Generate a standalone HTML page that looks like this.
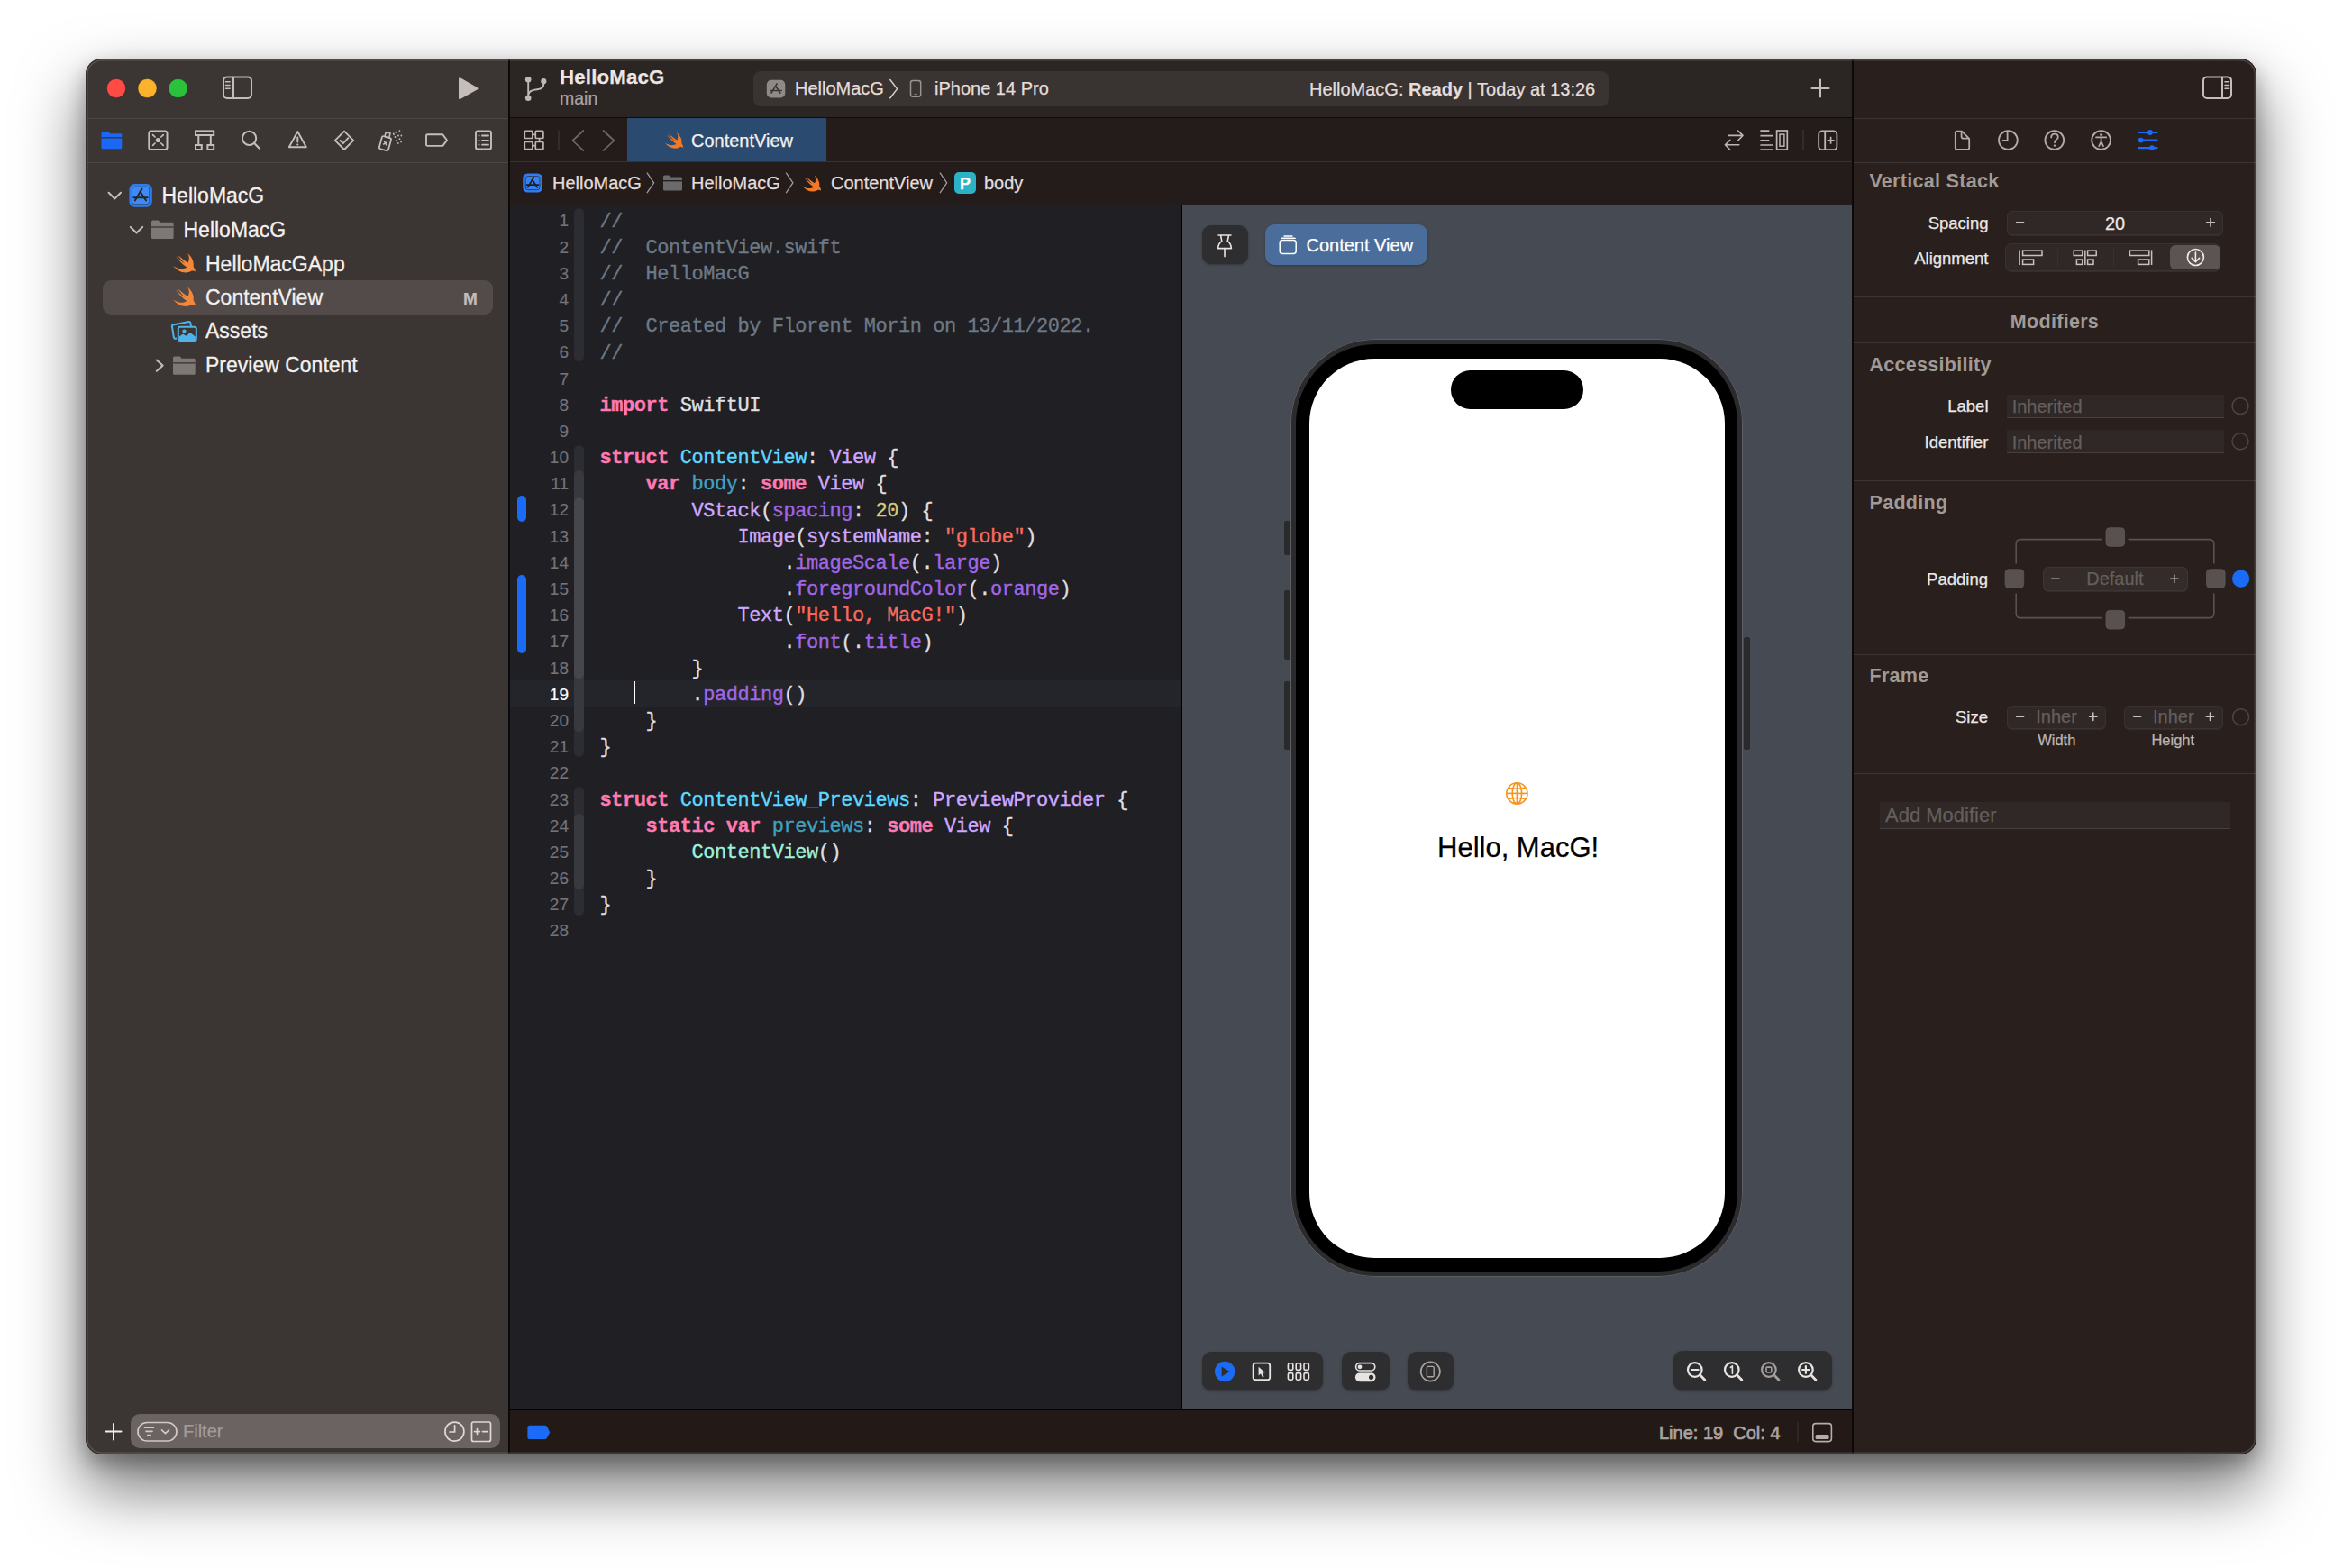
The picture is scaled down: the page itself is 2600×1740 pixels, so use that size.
<!DOCTYPE html>
<html><head><meta charset="utf-8">
<style>
*{box-sizing:border-box;margin:0;padding:0}
html,body{width:2600px;height:1740px;overflow:hidden;background:#fff}
body{position:relative;font-family:"Liberation Sans",sans-serif}
.a{position:absolute}
.t{position:absolute;white-space:pre;line-height:1;-webkit-text-stroke-width:0.25px}
#win{position:absolute;left:95px;top:65px;width:2409px;height:1548.8px;border-radius:18px;overflow:hidden;
 box-shadow:0 36px 70px 4px rgba(0,0,0,.52),0 10px 22px rgba(0,0,0,.28)}
#in{position:absolute;left:-95px;top:-65px;width:2600px;height:1740px;background:#231c1b}
#winborder{position:absolute;left:95px;top:65px;width:2409px;height:1548.8px;border-radius:18px;box-shadow:inset 0 0 0 1.2px rgba(30,27,26,.7),inset 0 0 0 2.4px rgba(255,255,255,.17);pointer-events:none}
.sep{position:absolute;height:1px}
svg{position:absolute;overflow:visible}
.code{position:absolute;left:665.4px;top:0;font-family:"Liberation Mono",monospace;font-size:22px;letter-spacing:-0.45px;-webkit-text-stroke:0.35px currentColor;white-space:pre;color:#dfdfe0}
.ln{position:absolute;left:580px;width:51px;padding-top:2px;text-align:right;font-family:"Liberation Sans",sans-serif;font-size:19px;color:#737378;white-space:pre;-webkit-text-stroke:0.2px #737378}
.k{color:#ff7ab2;font-weight:bold}
.ty{color:#5dd8ff}
.ot{color:#d0a8ff}
.fn{color:#a167e6}
.dc{color:#41a1c0}
.nu{color:#d9c97c}
.st{color:#fc6a5d}
.cm{color:#6c7986}
.pc{color:#9ef1dd}
.lbl{position:absolute;white-space:pre;line-height:1;-webkit-text-stroke-width:0.25px;color:#ece7e5;font-size:18.5px;text-align:right}
.hdr{position:absolute;white-space:pre;line-height:1;color:#a29a97;font-size:21.5px;font-weight:bold;letter-spacing:0.3px}
.fld{position:absolute;background:#2f2826;border-radius:6px;box-shadow:inset 0 0 0 1px rgba(255,255,255,.05),0 1px 0 rgba(255,255,255,.06)}
</style></head><body>
<div id="win"><div id="in">
 <!-- sidebar -->
 <div class="a" style="left:95px;top:64px;width:469px;height:1549px;background:#3b3533"></div>
 <div class="sep" style="left:95px;top:131px;width:469px;background:#4b4543"></div>
 <div class="sep" style="left:95px;top:179.5px;width:469px;background:#4b4543"></div>
 <!-- divider -->
 <div class="a" style="left:564px;top:64px;width:2px;height:1549px;background:#0c0a09"></div>
 <!-- editor titlebar -->
 <div class="a" style="left:566px;top:64px;width:1489px;height:67px;background:#2b2523"></div>
 <div class="a" style="left:566px;top:129.8px;width:1489px;height:1.6px;background:#0e0b0a"></div>
 <!-- tab bar -->
 <div class="a" style="left:566px;top:131px;width:1489px;height:48px;background:#231c1b"></div>
 <div class="a" style="left:696px;top:131px;width:221px;height:48px;background:#2a4a6f"></div>
 <div class="sep" style="left:566px;top:179px;width:1489px;background:#3a3230"></div>
 <!-- breadcrumb -->
 <div class="a" style="left:566px;top:180px;width:1489px;height:47px;background:#231c1b"></div>
 <div class="sep" style="left:566px;top:227px;width:1489px;background:#342d2b"></div>
 <!-- editor -->
 <div class="a" style="left:566px;top:228px;width:745px;height:1336px;background:#1f1f24"></div>
 <!-- preview -->
 <div class="a" style="left:1311px;top:228px;width:1px;height:1336px;background:#000"></div>
 <div class="a" style="left:1312px;top:228px;width:743px;height:1336px;background:#464a52"></div>
 <!-- status bar -->
 <div class="a" style="left:566px;top:1564px;width:1489px;height:1px;background:#000"></div>
 <div class="a" style="left:566px;top:1565px;width:1489px;height:50px;background:#231a18"></div>
 <!-- divider right -->
 <div class="a" style="left:2055px;top:64px;width:2px;height:1549px;background:#0c0a09"></div>
 <!-- inspector -->
 <div class="a" style="left:2057px;top:64px;width:447px;height:1549px;background:#29201e"></div>
 <div class="sep" style="left:2057px;top:131px;width:447px;background:#3d3533"></div>
 <div class="sep" style="left:2057px;top:180px;width:447px;background:#3d3533"></div>
 <div class="sep" style="left:2057px;top:329px;width:447px;background:#3d3533"></div>
 <div class="sep" style="left:2057px;top:380px;width:447px;background:#3d3533"></div>
 <div class="sep" style="left:2057px;top:533px;width:447px;background:#3d3533"></div>
 <div class="sep" style="left:2057px;top:726px;width:447px;background:#3d3533"></div>
 <div class="sep" style="left:2057px;top:858px;width:447px;background:#3d3533"></div>

 <!-- selected row -->
 <div class="a" style="left:113.7px;top:311.3px;width:433px;height:37.3px;border-radius:9px;background:#524b49"></div>
 <!-- tree text -->
 <div class="t" style="left:179.5px;top:205.8px;font-size:23px;color:#f4f0ef;-webkit-text-stroke:0.3px #f4f0ef">HelloMacG</div>
 <div class="t" style="left:203.5px;top:243.5px;font-size:23px;color:#f4f0ef;-webkit-text-stroke:0.3px #f4f0ef">HelloMacG</div>
 <div class="t" style="left:228px;top:281.5px;font-size:23px;color:#f4f0ef;-webkit-text-stroke:0.3px #f4f0ef">HelloMacGApp</div>
 <div class="t" style="left:228px;top:318.7px;font-size:23px;color:#f4f0ef;-webkit-text-stroke:0.3px #f4f0ef">ContentView</div>
 <div class="t" style="left:514px;top:322.1px;font-size:19px;font-weight:bold;color:#c4bcb9">M</div>
 <div class="t" style="left:228px;top:356px;font-size:23px;color:#f4f0ef;-webkit-text-stroke:0.3px #f4f0ef">Assets</div>
 <div class="t" style="left:228px;top:394.3px;font-size:23px;color:#f4f0ef;-webkit-text-stroke:0.3px #f4f0ef">Preview Content</div>
 <!-- filter bar -->
 <div class="a" style="left:144.7px;top:1569.4px;width:410px;height:38px;border-radius:10px;background:#6b6361"></div>
 <div class="t" style="left:203px;top:1577.8px;font-size:20px;color:#a39b99">Filter</div>
<!--SIDEBAR-->

 <div class="t" style="left:621px;top:75px;font-size:22.2px;font-weight:bold;letter-spacing:0.2px;color:#ece7e5">HelloMacG</div>
 <div class="t" style="left:621px;top:100.1px;font-size:19.5px;color:#aaa2a0">main</div>
 <div class="a" style="left:835.5px;top:79px;width:949px;height:38.5px;border-radius:8px;background:#393331"></div>
 <div class="t" style="left:882px;top:87.9px;font-size:20px;color:#e3dddb">HelloMacG</div>
 <div class="t" style="left:1037px;top:87.9px;font-size:20px;color:#e3dddb">iPhone 14 Pro</div>
 <div class="t" style="left:1453px;top:88.5px;font-size:20px;color:#e3dddb">HelloMacG: <b>Ready</b> | Today at 13:26</div>
 <div class="t" style="left:767px;top:145.5px;font-size:20px;color:#f4f1f0">ContentView</div>
 <div class="t" style="left:613px;top:193px;font-size:20px;color:#e3dddb">HelloMacG</div>
 <div class="t" style="left:767px;top:193px;font-size:20px;color:#e3dddb">HelloMacG</div>
 <div class="t" style="left:922px;top:193px;font-size:20px;color:#e3dddb">ContentView</div>
 <div class="t" style="left:1092px;top:193px;font-size:20px;color:#e3dddb">body</div>
 <div class="a" style="left:1059.4px;top:191.2px;width:24px;height:23.5px;border-radius:5px;background:#2ab3c7"></div>
 <div class="t" style="left:1065px;top:194.5px;font-size:18px;font-weight:bold;color:#fff">P</div>
<!--TITLEBAR-->

 <!-- current line -->
 <div class="a" style="left:566px;top:754.5px;width:745px;height:29.22px;background:#23252b"></div>
 <!-- fold ribbon -->
 <div class="a" style="left:636.5px;top:231px;width:11.5px;height:170px;border-radius:6px;background:#2c2d32"></div>
 <div class="a" style="left:636.5px;top:494px;width:11.5px;height:346px;border-radius:6px;background:#2c2d32"></div>
 <div class="a" style="left:636.5px;top:522px;width:11.5px;height:289.6px;border-radius:6px;background:#38393e"></div>
 <div class="a" style="left:636.5px;top:552px;width:11.5px;height:201px;border-radius:6px;background:#46474c"></div>
 <div class="a" style="left:636.5px;top:873px;width:11.5px;height:143px;border-radius:6px;background:#2c2d32"></div>
 <div class="a" style="left:636.5px;top:902.8px;width:11.5px;height:84.2px;border-radius:6px;background:#38393e"></div>
 <!-- change bars -->
 <div class="a" style="left:574px;top:550px;width:9.5px;height:29px;border-radius:5px;background:#1a6cf6"></div>
 <div class="a" style="left:574px;top:637.5px;width:9.5px;height:87.5px;border-radius:5px;background:#1a6cf6"></div>
 <!-- cursor -->
 <div class="a" style="left:703px;top:756px;width:2px;height:25px;background:#fff"></div>
 <div class="ln" style="top:228.4px;line-height:29.18px">1
2
3
4
5
6
7
8
9
10
11
12
13
14
15
16
17
18
<span style="color:#fff;-webkit-text-stroke:0.2px #fff">19</span>
20
21
22
23
24
25
26
27
28</div>
 <div class="code" style="top:231.6px;line-height:29.18px"><span class="cm">//</span>
<span class="cm">//  ContentView.swift</span>
<span class="cm">//  HelloMacG</span>
<span class="cm">//</span>
<span class="cm">//  Created by Florent Morin on 13/11/2022.</span>
<span class="cm">//</span>

<span class="k">import</span> SwiftUI

<span class="k">struct</span> <span class="ty">ContentView</span>: <span class="ot">View</span> {
    <span class="k">var</span> <span class="dc">body</span>: <span class="k">some</span> <span class="ot">View</span> {
        <span class="ot">VStack</span>(<span class="fn">spacing</span>: <span class="nu">20</span>) {
            <span class="ot">Image</span>(<span class="ot">systemName</span>: <span class="st">"globe"</span>)
                .<span class="fn">imageScale</span>(.<span class="fn">large</span>)
                .<span class="fn">foregroundColor</span>(.<span class="fn">orange</span>)
            <span class="ot">Text</span>(<span class="st">"Hello, MacG!"</span>)
                .<span class="fn">font</span>(.<span class="fn">title</span>)
        }
        .<span class="fn">padding</span>()
    }
}

<span class="k">struct</span> <span class="ty">ContentView_Previews</span>: <span class="ot">PreviewProvider</span> {
    <span class="k">static</span> <span class="k">var</span> <span class="dc">previews</span>: <span class="k">some</span> <span class="ot">View</span> {
        <span class="pc">ContentView</span>()
    }
}
</div>
<!--EDITOR-->

 <!-- pin button -->
 <div class="a" style="left:1334.3px;top:250px;width:51.2px;height:43px;border-radius:10px;background:#2e2e30;box-shadow:0 1px 3px rgba(0,0,0,.3)"></div>
 <!-- content view pill -->
 <div class="a" style="left:1404px;top:249.2px;width:180px;height:44.8px;border-radius:10px;background:#4a6d9c;box-shadow:0 1px 3px rgba(0,0,0,.25)"></div>
 <div class="t" style="left:1449.5px;top:262px;font-size:20px;color:#fff">Content View</div>
 <!-- phone -->
 <div class="a" style="left:1425.3px;top:578px;width:7px;height:38px;border-radius:2px;background:#2a2a2c"></div>
 <div class="a" style="left:1425.3px;top:655.4px;width:7px;height:76.3px;border-radius:2px;background:#2a2a2c"></div>
 <div class="a" style="left:1425.3px;top:755.6px;width:7px;height:76px;border-radius:2px;background:#2a2a2c"></div>
 <div class="a" style="left:1934.5px;top:707.3px;width:7px;height:124.3px;border-radius:2px;background:#2a2a2c"></div>
 <div class="a" style="left:1431.9px;top:376.1px;width:502.4px;height:1041px;border-radius:94px;background:#2b2b2d;box-shadow:inset 0 0 0 1px #5d5f63"></div>
 <div class="a" style="left:1437.9px;top:382.2px;width:490.5px;height:1028.5px;border-radius:88px;background:#000"></div>
 <div class="a" style="left:1453px;top:398px;width:461px;height:997.6px;border-radius:72px;background:#fff"></div>
 <div class="a" style="left:1610px;top:411px;width:147px;height:43px;border-radius:21.5px;background:#000"></div>
 <div class="t" style="left:1595px;top:924.5px;font-size:31px;color:#000">Hello, MacG!</div>
 <!-- bottom toolbar -->
 <div class="a" style="left:1334px;top:1499.6px;width:134.3px;height:43.4px;border-radius:10px;background:#2e2e30;box-shadow:0 1px 3px rgba(0,0,0,.3)"></div>
 <div class="a" style="left:1488.6px;top:1499.6px;width:53px;height:43.4px;border-radius:10px;background:#2e2e30;box-shadow:0 1px 3px rgba(0,0,0,.3)"></div>
 <div class="a" style="left:1562.4px;top:1499.6px;width:51.1px;height:43.4px;border-radius:10px;background:#2e2e30;box-shadow:0 1px 3px rgba(0,0,0,.3)"></div>
 <div class="a" style="left:1856.6px;top:1499.4px;width:176px;height:43.8px;border-radius:10px;background:#2e2e30;box-shadow:0 1px 3px rgba(0,0,0,.3)"></div>
 <!-- status bar -->
 <div class="t" style="left:1841px;top:1579.6px;font-size:20px;color:#aaa3a0;-webkit-text-stroke-width:0.7px">Line: 19  Col: 4</div>
<!--PREVIEW-->

 <div class="hdr" style="left:2074.4px;top:191.4px">Vertical Stack</div>
 <div class="lbl" style="left:2006.5px;width:200px;top:238.8px">Spacing</div>
 <div class="lbl" style="left:2006.5px;width:200px;top:277.7px">Alignment</div>
 <div class="fld" style="left:2227.2px;top:234.1px;width:240.3px;height:27.2px"></div>
 <div class="t" style="left:2247px;top:237.7px;width:200px;text-align:center;font-size:20px;color:#ece7e5">20</div>
 <div class="fld" style="left:2225px;top:270.2px;width:239.2px;height:30.5px;border-radius:7px"></div>
 <div class="a" style="left:2407.6px;top:271.8px;width:56px;height:27.2px;border-radius:6px;background:#5b5452"></div>
 <div class="hdr" style="left:2180px;width:200px;text-align:center;top:346.5px">Modifiers</div>
 <div class="hdr" style="left:2074.4px;top:394.7px">Accessibility</div>
 <div class="lbl" style="left:2006.5px;width:200px;top:441.8px">Label</div>
 <div class="lbl" style="left:2006.5px;width:200px;top:481.6px">Identifier</div>
 <div class="a" style="left:2227px;top:437.5px;width:240.7px;height:26.2px;background:#2f2826;border-bottom:1px solid #463f3d"></div>
 <div class="a" style="left:2227px;top:477px;width:240.7px;height:25.6px;background:#2f2826;border-bottom:1px solid #463f3d"></div>
 <div class="t" style="left:2232.7px;top:441px;font-size:20px;color:#655e5c">Inherited</div>
 <div class="t" style="left:2232.7px;top:480.8px;font-size:20px;color:#655e5c">Inherited</div>
 <div class="hdr" style="left:2074.5px;top:548.1px">Padding</div>
 <div class="lbl" style="left:2006px;width:200px;top:634.0px">Padding</div>
 <div class="fld" style="left:2266.5px;top:629.3px;width:161.5px;height:27.1px;background:#332c2a"></div>
 <div class="t" style="left:2315.2px;top:632.4px;font-size:20px;color:#655e5c">Default</div>
 <div class="hdr" style="left:2074.5px;top:740.4px">Frame</div>
 <div class="lbl" style="left:2006px;width:200px;top:786.8px">Size</div>
 <div class="fld" style="left:2226.8px;top:782.7px;width:110.6px;height:26.6px"></div>
 <div class="fld" style="left:2356.5px;top:782.7px;width:110.5px;height:26.6px"></div>
 <div class="t" style="left:2259.3px;top:785.3px;font-size:20px;color:#655e5c">Inher</div>
 <div class="t" style="left:2389px;top:785.3px;font-size:20px;color:#655e5c">Inher</div>
 <div class="t" style="left:2232.3px;width:100px;text-align:center;top:813px;font-size:16.5px;color:#bdb5b2">Width</div>
 <div class="t" style="left:2361.3px;width:100px;text-align:center;top:813px;font-size:16.5px;color:#bdb5b2">Height</div>
 <div class="a" style="left:2086px;top:890px;width:388.5px;height:29.8px;background:#2f2826;border-bottom:1px solid #463f3d"></div>
 <div class="t" style="left:2092px;top:894.2px;font-size:22px;color:#655e5c">Add Modifier</div>
<!--INSPECTOR-->

<svg style="left:0;top:0" width="2600" height="1740" viewBox="0 0 2600 1740">
 <!-- traffic lights -->
 <circle cx="129" cy="98" r="10.5" fill="#fe4c45" stroke="rgba(0,0,0,.25)" stroke-width="1"/>
 <circle cx="163.5" cy="98" r="10.5" fill="#fdb22b" stroke="rgba(0,0,0,.25)" stroke-width="1"/>
 <circle cx="197.6" cy="98" r="10.5" fill="#2ac13b" stroke="rgba(0,0,0,.25)" stroke-width="1"/>
 <!-- sidebar toggle -->
 <rect x="248" y="85.4" width="31" height="23.5" rx="4" fill="none" stroke="#c5bdba" stroke-width="2"/>
 <line x1="259" y1="85.4" x2="259" y2="109" stroke="#c5bdba" stroke-width="2"/>
 <g stroke="#c5bdba" stroke-width="1.6" stroke-linecap="round"><line x1="250.5" y1="90.8" x2="255" y2="90.8"/><line x1="250.5" y1="94.5" x2="255" y2="94.5"/><line x1="250.5" y1="98.2" x2="255" y2="98.2"/></g>
 <!-- play -->
 <path d="M509,88 L509,108.5 Q509,111 511.2,109.8 L529.5,99.6 Q531.5,98.2 529.5,96.9 L511.2,86.6 Q509,85.4 509,88 Z" fill="#c5bdba"/>
 <!-- navigator icons -->
 <path fill="#1b67f6" d="M112.5,147.5 Q112.5,146.1 114,146.1 L119.5,146.1 Q120.8,146.1 121.5,147.4 L122,148.3 L134,148.3 Q135.3,148.3 135.3,149.6 L135.3,152 L112.5,152 Z M112.5,153.4 L135.3,153.4 L135.3,164 Q135.3,165.3 134,165.3 L113.8,165.3 Q112.5,165.3 112.5,164 Z"/>
 <rect x="165.3" y="145.4" width="20.2" height="20.6" rx="2.5" fill="none" stroke="#c5bdba" stroke-width="2"/>
 <circle cx="175.4" cy="155.5" r="2.6" fill="#c5bdba"/>
 <g stroke="#c5bdba" stroke-width="1.7" stroke-linecap="round"><line x1="169.6" y1="149.6" x2="172" y2="152"/><line x1="181.2" y1="149.6" x2="178.8" y2="152"/><line x1="169.6" y1="161.4" x2="172" y2="159"/><line x1="181.2" y1="161.4" x2="178.8" y2="159"/></g>
 <rect x="217" y="145.4" width="20.2" height="4.6" fill="none" stroke="#c5bdba" stroke-width="2"/>
 <line x1="220.3" y1="150" x2="220.3" y2="161" stroke="#c5bdba" stroke-width="2"/><line x1="233.8" y1="150" x2="233.8" y2="161" stroke="#c5bdba" stroke-width="2"/>
 <rect x="217" y="161" width="6.8" height="5" fill="none" stroke="#c5bdba" stroke-width="2"/><rect x="230.4" y="161" width="6.8" height="5" fill="none" stroke="#c5bdba" stroke-width="2"/>
 <circle cx="276.6" cy="153.4" r="7.6" fill="none" stroke="#c5bdba" stroke-width="2"/>
 <line x1="282.2" y1="159" x2="287.6" y2="164.6" stroke="#c5bdba" stroke-width="2.2" stroke-linecap="round"/>
 <path d="M330.3,146 L339.8,163.3 L320.8,163.3 Z" fill="none" stroke="#c5bdba" stroke-width="1.9" stroke-linejoin="round"/>
 <line x1="330.3" y1="152.5" x2="330.3" y2="157.5" stroke="#c5bdba" stroke-width="2" stroke-linecap="round"/><circle cx="330.3" cy="160.5" r="1.1" fill="#c5bdba"/>
 <path d="M382,145.6 L392.2,155.8 L382,166 L371.8,155.8 Z" fill="none" stroke="#c5bdba" stroke-width="1.9" stroke-linejoin="round"/>
 <path d="M377.6,156 L380.8,159.2 L386.4,153.2" fill="none" stroke="#c5bdba" stroke-width="1.9" stroke-linecap="round" stroke-linejoin="round"/>
 <g transform="rotate(15 428 158)"><rect x="422.5" y="152" width="10.5" height="14.5" rx="1.8" fill="none" stroke="#c5bdba" stroke-width="1.8"/><rect x="425.3" y="147" width="5" height="5" fill="none" stroke="#c5bdba" stroke-width="1.6"/>
 <path d="M425.8,157 L429.8,161 M429.8,157 L425.8,161" stroke="#c5bdba" stroke-width="1.5"/></g>
 <g fill="#c5bdba"><circle cx="436.8" cy="148.5" r=".9"/><circle cx="439.3" cy="146.8" r=".9"/><circle cx="443.4" cy="145.1" r=".9"/><circle cx="438.5" cy="152" r=".9"/><circle cx="442" cy="150.5" r=".9"/><circle cx="445.4" cy="150.5" r=".9"/><circle cx="440" cy="155.8" r=".9"/><circle cx="443.5" cy="154.2" r=".9"/><circle cx="441.8" cy="158.9" r=".9"/><circle cx="445" cy="157.4" r=".9"/><circle cx="437" cy="149.5" r=".7"/></g>
 <path d="M474.5,149.3 L491.3,149.3 L496,155.6 L491.3,161.9 L474.5,161.9 Q473,161.9 473,160.4 L473,150.8 Q473,149.3 474.5,149.3 Z" fill="none" stroke="#c5bdba" stroke-width="1.9" stroke-linejoin="round"/>
 <rect x="528" y="145.5" width="17" height="20" rx="2" fill="none" stroke="#c5bdba" stroke-width="1.9"/>
 <g stroke="#c5bdba" stroke-width="1.8" stroke-linecap="round"><line x1="535" y1="150.5" x2="542" y2="150.5"/><line x1="535" y1="155.8" x2="542" y2="155.8"/><line x1="535" y1="160.6" x2="542" y2="160.6"/></g>
 <g fill="#c5bdba"><circle cx="531.5" cy="150.5" r="1"/><circle cx="531.5" cy="155.8" r="1"/><circle cx="531.5" cy="160.6" r="1"/></g>
 <!-- tree -->
 <path d="M120.6,213.8 L127.3,220.4 L134,213.8" fill="none" stroke="#c2bab7" stroke-width="2.1" stroke-linecap="round" stroke-linejoin="round"/>
 <rect x="144.4" y="205.1" width="23.400000000000006" height="23.599999999999994" rx="5" fill="#3d8bf8" stroke="#2d7cf6" stroke-width="2"/><rect x="146.4" y="207.1" width="19.400000000000006" height="19.599999999999994" rx="3" fill="none" stroke="#2b2523" stroke-width="0.9" opacity=".7"/><g stroke="#2b2523" stroke-width="2.00" stroke-linecap="round" fill="none"><path d="M157.50,209.70 L149.80,222.50"/><path d="M155.50,212.70 L162.10,222.50"/><path d="M148.30,219.20 L163.70,219.20"/></g>
 <path d="M144.9,251.9 L151.5,258.6 L158.1,251.9" fill="none" stroke="#c2bab7" stroke-width="2.1" stroke-linecap="round" stroke-linejoin="round"/>
 <path fill="#7d7876" d="M169.5,244.6 L175.38,244.6 Q176.364,244.6 177.34799999999998,246.79999999999998 L191.1,246.79999999999998 Q192.6,246.79999999999998 192.6,248.29999999999998 L192.6,263.5 Q192.6,265 191.1,265 L169.5,265 Q168,265 168,263.5 L168,246.1 Q168,244.6 169.5,244.6 Z"/><rect x="168" y="251.332" width="24.599999999999994" height="1.3" fill="#3b3533"/>
 <path transform="translate(192,281.1) scale(1.0)" fill="#f5873a" d="M16.2,0 C20.5,3.6 23.6,9.2 22.6,14.6 C23.8,16.4 25,18.6 24.8,20.4 C23.4,19.2 21.6,19 19.8,19.8 C13.5,23.2 5.6,20.6 0.3,13.8 C5.6,17.6 11.6,18.2 15.4,15.4 C11,12.6 6.4,8.2 2.7,2.8 C6.6,6.6 10.6,9.8 13.2,11.4 C10.4,8.4 7.6,5 5.4,1.8 C9.4,5.2 13.6,8.6 16.6,10.4 C18.2,7.2 18.4,3.6 16.2,0 Z"/>
 <path transform="translate(192,318.6) scale(1.0)" fill="#f5873a" d="M16.2,0 C20.5,3.6 23.6,9.2 22.6,14.6 C23.8,16.4 25,18.6 24.8,20.4 C23.4,19.2 21.6,19 19.8,19.8 C13.5,23.2 5.6,20.6 0.3,13.8 C5.6,17.6 11.6,18.2 15.4,15.4 C11,12.6 6.4,8.2 2.7,2.8 C6.6,6.6 10.6,9.8 13.2,11.4 C10.4,8.4 7.6,5 5.4,1.8 C9.4,5.2 13.6,8.6 16.6,10.4 C18.2,7.2 18.4,3.6 16.2,0 Z"/>
 <g fill="none" stroke="#4fb3ea" stroke-width="2" stroke-linejoin="round">
  <path d="M192,360.5 L209.5,357 Q211,356.8 211.3,358.3 L212,362"/>
  <path d="M196,375.5 L194.6,375.8 Q193.2,376 192.9,374.6 L190.9,362.1 Q190.7,360.7 192,360.5"/>
  <rect x="197.8" y="362.8" width="20" height="15.3" rx="2"/>
 </g>
 <circle cx="204.5" cy="367.6" r="2.1" fill="#4fb3ea"/>
 <path d="M198.8,377 L198.8,373.5 L203,370.5 L206.5,372.8 L211,369 L216.8,373.5 L216.8,377 Z" fill="#4fb3ea"/>
 <path d="M173.8,399.5 L180.6,405.6 L173.8,411.7" fill="none" stroke="#c2bab7" stroke-width="2.1" stroke-linecap="round" stroke-linejoin="round"/>
 <path fill="#7d7876" d="M193.5,395.5 L199.41,395.5 Q200.398,395.5 201.386,397.7 L215.2,397.7 Q216.7,397.7 216.7,399.2 L216.7,414.3 Q216.7,415.8 215.2,415.8 L193.5,415.8 Q192,415.8 192,414.3 L192,397.0 Q192,395.5 193.5,395.5 Z"/><rect x="192" y="402.199" width="24.69999999999999" height="1.3" fill="#3b3533"/>
 <!-- filter bar icons -->
 <g stroke="#f2eeed" stroke-width="2" stroke-linecap="round"><line x1="117.5" y1="1588.6" x2="134.5" y2="1588.6"/><line x1="126" y1="1580" x2="126" y2="1597.5"/></g>
 <rect x="153" y="1578.5" width="43" height="20.5" rx="10.2" fill="none" stroke="#d0c8c5" stroke-width="1.7"/>
 <g stroke="#d0c8c5" stroke-width="1.6" stroke-linecap="round"><line x1="160.5" y1="1584.3" x2="170.5" y2="1584.3"/><line x1="162" y1="1588.4" x2="169" y2="1588.4"/><line x1="163.8" y1="1592.5" x2="167.3" y2="1592.5"/></g>
 <path d="M179.5,1586.8 L183.5,1590.6 L187.5,1586.8" fill="none" stroke="#d0c8c5" stroke-width="1.7" stroke-linecap="round" stroke-linejoin="round"/>
 <circle cx="504.4" cy="1588.6" r="10.5" fill="none" stroke="#ded8d6" stroke-width="1.7"/>
 <path d="M504.6,1581.8 L504.6,1589 L499,1589" fill="none" stroke="#ded8d6" stroke-width="1.7" stroke-linecap="round"/>
 <rect x="523.5" y="1578" width="21" height="21.5" rx="2" fill="none" stroke="#ded8d6" stroke-width="1.7"/>
 <g stroke="#ded8d6" stroke-width="1.6" stroke-linecap="round"><line x1="526.5" y1="1588.6" x2="532.5" y2="1588.6"/><line x1="529.5" y1="1585.6" x2="529.5" y2="1591.6"/><line x1="535.5" y1="1588.6" x2="541" y2="1588.6"/></g>

 <!-- branch -->
 <g fill="#c0b8b6"><circle cx="586.2" cy="88.2" r="3.3"/><circle cx="586.2" cy="108.7" r="3.3"/><circle cx="603.3" cy="90.2" r="3.1"/></g>
 <path d="M586.2,88.2 L586.2,108.7 M603.3,90.2 L603.3,93 Q603.3,98.6 596,99.3 Q587,100 586.5,105" fill="none" stroke="#c0b8b6" stroke-width="1.9"/>
 <!-- scheme -->
 <rect x="851.8" y="89.7" width="18.5" height="17.89999999999999" rx="4.1000000000000005" fill="#8f8a88" stroke="#8f8a88" stroke-width="2"/><g stroke="#3a3432" stroke-width="1.61" stroke-linecap="round" fill="none"><path d="M862.18,92.84 L855.97,103.17"/><path d="M860.57,95.26 L865.89,103.17"/><path d="M854.75,100.51 L867.18,100.51"/></g>
 <path d="M987.4,88 L995.6,98.6 L987.4,109.2" fill="none" stroke="#d6d0ce" stroke-width="1.5" stroke-linejoin="round"/>
 <rect x="1010.5" y="89.6" width="11.2" height="17.6" rx="2.4" fill="none" stroke="#9b9391" stroke-width="1.5"/>
 <line x1="1014.5" y1="104.6" x2="1017.7" y2="104.6" stroke="#9b9391" stroke-width="1"/>
 <!-- titlebar plus -->
 <g stroke="#c5bdba" stroke-width="2" stroke-linecap="round"><line x1="2010.5" y1="98" x2="2029.5" y2="98"/><line x1="2020" y1="88.5" x2="2020" y2="107.5"/></g>
 <!-- inspector toggle -->
 <rect x="2445" y="85.4" width="31" height="23.5" rx="4" fill="none" stroke="#c5bdba" stroke-width="2"/>
 <line x1="2466" y1="85.4" x2="2466" y2="109" stroke="#c5bdba" stroke-width="2"/>
 <g stroke="#c5bdba" stroke-width="1.6" stroke-linecap="round"><line x1="2469" y1="90.8" x2="2473.5" y2="90.8"/><line x1="2469" y1="94.5" x2="2473.5" y2="94.5"/><line x1="2469" y1="98.2" x2="2473.5" y2="98.2"/></g>
 <!-- tab bar left -->
 <g fill="none" stroke="#bdb5b2" stroke-width="1.7">
  <rect x="582.3" y="145.3" width="8.6" height="8.2" rx=".8"/><rect x="594.3" y="145.3" width="8.6" height="8.2" rx=".8"/>
  <rect x="582.3" y="157.5" width="8.6" height="8.2" rx=".8"/><rect x="594.3" y="157.5" width="8.6" height="8.2" rx=".8"/>
  <line x1="590.9" y1="149.4" x2="594.3" y2="149.4"/><line x1="598.6" y1="153.5" x2="598.6" y2="157.5"/><line x1="590.9" y1="161.6" x2="594.3" y2="161.6"/>
 </g>
 <line x1="620" y1="144.5" x2="620" y2="166.5" stroke="#3f3735" stroke-width="1.2"/>
 <path d="M647.4,145 L635.4,156 L647.4,167.2" fill="none" stroke="#6f6664" stroke-width="1.7" stroke-linecap="round" stroke-linejoin="round"/>
 <path d="M669.5,145 L681.5,156 L669.5,167.2" fill="none" stroke="#6f6664" stroke-width="1.7" stroke-linecap="round" stroke-linejoin="round"/>
 <path transform="translate(737.6,147) scale(0.83)" fill="#f27a26" d="M16.2,0 C20.5,3.6 23.6,9.2 22.6,14.6 C23.8,16.4 25,18.6 24.8,20.4 C23.4,19.2 21.6,19 19.8,19.8 C13.5,23.2 5.6,20.6 0.3,13.8 C5.6,17.6 11.6,18.2 15.4,15.4 C11,12.6 6.4,8.2 2.7,2.8 C6.6,6.6 10.6,9.8 13.2,11.4 C10.4,8.4 7.6,5 5.4,1.8 C9.4,5.2 13.6,8.6 16.6,10.4 C18.2,7.2 18.4,3.6 16.2,0 Z"/>
 <!-- tab bar right -->
 <g fill="none" stroke="#bdb5b2" stroke-width="1.6" stroke-linecap="round" stroke-linejoin="round">
  <path d="M1918.2,150.4 L1934,150.4 M1928.6,145 L1934,150.4 L1928.6,156"/>
  <path d="M1929.8,160.8 L1914.4,160.8 M1919.8,155.4 L1914.4,160.8 L1919.8,166.2"/>
 </g>
 <g stroke="#bdb5b2" stroke-width="1.7"><line x1="1953.4" y1="145.2" x2="1963.3" y2="145.2"/><line x1="1953.4" y1="150.6" x2="1967" y2="150.6"/><line x1="1953.4" y1="155.8" x2="1963.3" y2="155.8"/><line x1="1953.4" y1="161" x2="1967" y2="161"/><line x1="1953.4" y1="166.1" x2="1967" y2="166.1"/></g>
 <rect x="1971.6" y="145" width="11.7" height="21" fill="none" stroke="#bdb5b2" stroke-width="1.7"/>
 <rect x="1975" y="149.1" width="4.9" height="13.1" fill="none" stroke="#bdb5b2" stroke-width="1.5"/>
 <line x1="2001" y1="144" x2="2001" y2="167" stroke="#3f3735" stroke-width="1.2"/>
 <rect x="2018.2" y="145.4" width="20.2" height="20.8" rx="4" fill="none" stroke="#bdb5b2" stroke-width="1.8"/>
 <line x1="2025.2" y1="145.4" x2="2025.2" y2="166.2" stroke="#bdb5b2" stroke-width="1.8"/>
 <g stroke="#bdb5b2" stroke-width="1.6"><line x1="2027.6" y1="155.8" x2="2035.6" y2="155.8"/><line x1="2031.6" y1="151.8" x2="2031.6" y2="159.8"/></g>
 <!-- breadcrumb -->
 <rect x="581.2" y="193.5" width="19.799999999999955" height="19.099999999999994" rx="4.359999999999991" fill="#3483f6" stroke="#2f7bf4" stroke-width="2"/><rect x="583.2" y="195.5" width="15.799999999999955" height="15.099999999999994" rx="2.6159999999999943" fill="none" stroke="#231c1b" stroke-width="0.9" opacity=".7"/><g stroke="#231c1b" stroke-width="1.72" stroke-linecap="round" fill="none"><path d="M592.30,196.87 L585.69,207.86"/><path d="M590.59,199.45 L596.25,207.86"/><path d="M584.41,205.02 L597.62,205.02"/></g>
 <path d="M717.9,191.6 L725.6,202.9 L717.9,214.2" fill="none" stroke="#a29a98" stroke-width="1.3" stroke-linejoin="round"/>
 <path fill="#6b6a6b" d="M737.5,194.4 L742.3,194.4 Q743.14,194.4 743.98,196.6 L755.5,196.6 Q757,196.6 757,198.1 L757,210.0 Q757,211.5 755.5,211.5 L737.5,211.5 Q736,211.5 736,210.0 L736,195.9 Q736,194.4 737.5,194.4 Z"/><rect x="736" y="200.043" width="21" height="1.3" fill="#231c1b"/>
 <path d="M872.2,191.6 L879.9,202.9 L872.2,214.2" fill="none" stroke="#a29a98" stroke-width="1.3" stroke-linejoin="round"/>
 <path transform="translate(890,194.4) scale(0.85)" fill="#f27a26" d="M16.2,0 C20.5,3.6 23.6,9.2 22.6,14.6 C23.8,16.4 25,18.6 24.8,20.4 C23.4,19.2 21.6,19 19.8,19.8 C13.5,23.2 5.6,20.6 0.3,13.8 C5.6,17.6 11.6,18.2 15.4,15.4 C11,12.6 6.4,8.2 2.7,2.8 C6.6,6.6 10.6,9.8 13.2,11.4 C10.4,8.4 7.6,5 5.4,1.8 C9.4,5.2 13.6,8.6 16.6,10.4 C18.2,7.2 18.4,3.6 16.2,0 Z"/>
 <path d="M1043,191.6 L1050.7,202.9 L1043,214.2" fill="none" stroke="#a29a98" stroke-width="1.3" stroke-linejoin="round"/>
 <!-- inspector tabs -->
 <g fill="none" stroke="#b3aba8" stroke-width="1.8" stroke-linejoin="round">
  <path d="M2171.5,145.6 L2177,145.6 L2185.2,153.8 L2185.2,164 Q2185.2,165.8 2183.4,165.8 L2171.5,165.8 Q2169.8,165.8 2169.8,164 L2169.8,147.4 Q2169.8,145.6 2171.5,145.6 Z"/>
  <path d="M2176.6,145.8 L2176.6,151.4 Q2176.6,153.6 2178.8,153.6 L2185,153.6"/>
  <circle cx="2228.4" cy="155.6" r="10.4"/>
  <path d="M2227.6,147.6 L2227.6,155.9 L2222.6,155.9" stroke-linecap="round"/>
  <circle cx="2279.8" cy="155.6" r="10.4"/>
  <circle cx="2331.6" cy="155.6" r="10.4"/>
 </g>
 <path d="M2276.2,152.4 Q2276.2,148.6 2280,148.6 Q2283.8,148.6 2283.8,152 Q2283.8,154.2 2281.6,155.2 Q2280,156 2280,158.2" fill="none" stroke="#b3aba8" stroke-width="1.8" stroke-linecap="round"/>
 <circle cx="2280" cy="161.6" r="1.2" fill="#b3aba8"/>
 <circle cx="2331.6" cy="149.4" r="1.5" fill="#b3aba8"/>
 <path d="M2326,152.4 L2337.2,152.4 M2331.6,152.4 L2331.6,157.4 M2331.6,157 L2329.2,162.2 M2331.6,157 L2334,162.2" fill="none" stroke="#b3aba8" stroke-width="1.7" stroke-linecap="round" stroke-linejoin="round"/>
 <g stroke="#1a6cf6" stroke-width="2.2" stroke-linecap="round"><line x1="2373" y1="147" x2="2393.5" y2="147"/><line x1="2373" y1="155.6" x2="2393.5" y2="155.6"/><line x1="2373" y1="164.1" x2="2393.5" y2="164.1"/></g>
 <g fill="#1a6cf6"><circle cx="2385.9" cy="147" r="2.9"/><circle cx="2375.7" cy="155.6" r="2.9"/><circle cx="2388" cy="164.1" r="2.9"/></g>

 <!-- pin -->
 <g fill="none" stroke="#e8e4e2" stroke-width="1.6" stroke-linejoin="round" stroke-linecap="round">
  <path d="M1352,261 L1366,261 M1354.5,261 L1355.8,267.6 Q1352,270 1351.6,275.6 L1366.4,275.6 Q1366,270 1362.2,267.6 L1363.5,261"/>
  <line x1="1359" y1="275.6" x2="1359" y2="284.6"/>
 </g>
 <!-- pill icon -->
 <g fill="none" stroke="#fff" stroke-width="1.5">
  <line x1="1424.5" y1="262" x2="1434.5" y2="262"/>
  <path d="M1421.6,265 Q1421.6,264.2 1422.6,264.2 L1436.4,264.2 Q1437.4,264.2 1437.4,265"/>
  <rect x="1420.2" y="266.4" width="18" height="15" rx="3"/>
 </g>
 <!-- globe -->
 <g fill="none" stroke="#f7931e" stroke-width="1.6">
  <circle cx="1683.4" cy="880.4" r="11.6"/>
  <ellipse cx="1683.4" cy="880.4" rx="5.2" ry="11.6"/>
  <line x1="1683.4" y1="868.8" x2="1683.4" y2="892"/>
  <line x1="1671.8" y1="880.4" x2="1695" y2="880.4"/>
  <path d="M1674,874 Q1683.4,876.6 1692.8,874 M1674,886.8 Q1683.4,884.2 1692.8,886.8"/>
 </g>
 <!-- bottom toolbar -->
 <circle cx="1359.2" cy="1522" r="11.2" fill="#1a6cf6"/>
 <path d="M1355.6,1516.4 L1364.6,1522 L1355.6,1527.6 Z" fill="#2e2e30"/>
 <rect x="1390.6" y="1512.6" width="18.6" height="18.6" rx="2.8" fill="none" stroke="#e8e4e2" stroke-width="1.8"/>
 <path d="M1396.6,1516.8 L1396.6,1526.4 L1399,1524.2 L1401,1528.4 L1402.6,1527.6 L1400.6,1523.4 L1403.8,1523.2 Z" fill="#e8e4e2"/>
 <g fill="none" stroke="#e8e4e2" stroke-width="1.6">
  <rect x="1429.4" y="1512.8" width="5.4" height="7.6" rx="1.6"/><rect x="1438.2" y="1512.8" width="5.4" height="7.6" rx="1.6"/><rect x="1447" y="1512.8" width="5.4" height="7.6" rx="1.6"/>
  <rect x="1429.4" y="1523.6" width="5.4" height="7.6" rx="1.6"/><rect x="1438.2" y="1523.6" width="5.4" height="7.6" rx="1.6"/><rect x="1447" y="1523.6" width="5.4" height="7.6" rx="1.6"/>
 </g>
 <rect x="1504.6" y="1512.6" width="21.2" height="8.4" rx="4.2" fill="none" stroke="#e8e4e2" stroke-width="1.6"/>
 <circle cx="1509" cy="1516.8" r="2.4" fill="#e8e4e2"/>
 <rect x="1503.9" y="1523.4" width="22.6" height="9.8" rx="4.9" fill="#e8e4e2"/>
 <circle cx="1521.6" cy="1528.3" r="2.6" fill="#2e2e30"/>
 <circle cx="1587.3" cy="1522" r="10.6" fill="none" stroke="#a9a5a3" stroke-width="1.7"/>
 <rect x="1583.4" y="1516.4" width="7.8" height="11.4" rx="1.4" fill="none" stroke="#a9a5a3" stroke-width="1.4"/>
 <g fill="none" stroke-width="2.2" stroke-linecap="round">
  <g stroke="#e8e4e2"><circle cx="1880.8" cy="1520" r="7.8"/><line x1="1886.4" y1="1525.6" x2="1891.8" y2="1531.2" stroke-width="2.8"/><line x1="1877" y1="1520" x2="1884.6" y2="1520"/></g>
  <g stroke="#e8e4e2"><circle cx="1921.8" cy="1520" r="7.8"/><line x1="1927.4" y1="1525.6" x2="1932.8" y2="1531.2" stroke-width="2.8"/></g>
  <g stroke="#a29e9c"><circle cx="1962.9" cy="1520" r="7.8"/><line x1="1968.5" y1="1525.6" x2="1973.9" y2="1531.2" stroke-width="2.8"/><rect x="1960" y="1517.1" width="5.8" height="5.8" rx="1" stroke-width="1.6"/></g>
  <g stroke="#e8e4e2"><circle cx="2003.9" cy="1520" r="7.8"/><line x1="2009.5" y1="1525.6" x2="2014.9" y2="1531.2" stroke-width="2.8"/><line x1="2000.1" y1="1520" x2="2007.7" y2="1520"/><line x1="2003.9" y1="1516.2" x2="2003.9" y2="1523.8"/></g>
 </g>
 <path d="M1920.4,1517.4 L1922.4,1515.8 L1922.4,1524.2" fill="none" stroke="#e8e4e2" stroke-width="1.6" stroke-linecap="round" stroke-linejoin="round"/>
 <!-- status bar -->
 <path d="M588,1581.8 L604.4,1581.8 Q606,1581.8 607,1583 L610.2,1589.4 L607,1595.8 Q606,1597 604.4,1597 L588,1597 Q585.4,1597 585.4,1594.4 L585.4,1584.4 Q585.4,1581.8 588,1581.8 Z" fill="#1a6cf6"/>
 <line x1="1995" y1="1578" x2="1995" y2="1600" stroke="#3a3230" stroke-width="1.2"/>
 <rect x="2011.8" y="1579.6" width="20.6" height="20" rx="3" fill="none" stroke="#b5adaa" stroke-width="1.6"/>
 <rect x="2014.6" y="1592" width="15" height="5" rx="1.5" fill="#b5adaa"/>

 <!-- inspector controls -->
 <g stroke="#c8c0bd" stroke-width="1.6" stroke-linecap="round">
  <line x1="2237.6" y1="246.9" x2="2245.6" y2="246.9"/>
  <line x1="2448.6" y1="246.9" x2="2457.4" y2="246.9"/><line x1="2453" y1="242.5" x2="2453" y2="251.3"/>
 </g>
 <line x1="2283.3" y1="276" x2="2283.3" y2="295" stroke="#3a3331" stroke-width="1"/>
 <line x1="2345.4" y1="276" x2="2345.4" y2="295" stroke="#3a3331" stroke-width="1"/>
 <g fill="none" stroke="#c8c0bd" stroke-width="1.5">
  <line x1="2241.1" y1="277.4" x2="2241.1" y2="294"/>
  <rect x="2244.6" y="278.1" width="21.4" height="5.4"/><rect x="2244.6" y="288" width="12" height="5.4"/>
  <line x1="2313.8" y1="277.4" x2="2313.8" y2="294"/>
  <rect x="2301.2" y="278.1" width="9.6" height="5.4"/><rect x="2316.6" y="278.1" width="9.6" height="5.4"/>
  <rect x="2304.4" y="288" width="6.4" height="5.4"/><rect x="2316.6" y="288" width="6.4" height="5.4"/>
  <line x1="2387.6" y1="277.4" x2="2387.6" y2="294"/>
  <rect x="2363.4" y="278.1" width="21.4" height="5.4"/><rect x="2372.6" y="288" width="12.2" height="5.4"/>
 </g>
 <circle cx="2436.4" cy="285.5" r="9" fill="none" stroke="#f0ecea" stroke-width="1.6"/>
 <path d="M2436.4,280 L2436.4,290.4 M2432.2,286.4 L2436.4,290.6 L2440.6,286.4" fill="none" stroke="#f0ecea" stroke-width="1.6" stroke-linecap="round" stroke-linejoin="round"/>
 <circle cx="2486" cy="450.6" r="9" fill="none" stroke="#4d4644" stroke-width="1.5"/>
 <circle cx="2486" cy="489.8" r="9" fill="none" stroke="#4d4644" stroke-width="1.5"/>
 <!-- padding box -->
 <path d="M2333,598.6 L2242.4,598.6 Q2237.2,598.6 2237.2,603.8 L2237.2,625.5 M2237.2,658.6 L2237.2,680.4 Q2237.2,685.6 2242.4,685.6 L2333,685.6 M2361.6,598.6 L2451.6,598.6 Q2456.8,598.6 2456.8,603.8 L2456.8,625.5 M2456.8,658.6 L2456.8,680.4 Q2456.8,685.6 2451.6,685.6 L2361.6,685.6" fill="none" stroke="#5a5250" stroke-width="1.6"/>
 <g fill="#585150" stroke="#5f5856" stroke-width=".8">
  <rect x="2337" y="585.7" width="20.6" height="20.6" rx="4"/>
  <rect x="2337" y="677.4" width="20.6" height="20.6" rx="4"/>
  <rect x="2225.1" y="631.7" width="20.6" height="20.6" rx="4"/>
  <rect x="2448.5" y="631.7" width="20.6" height="20.6" rx="4"/>
 </g>
 <g stroke="#c8c0bd" stroke-width="1.5" stroke-linecap="round">
  <line x1="2276.6" y1="642.3" x2="2285" y2="642.3"/>
  <line x1="2408.6" y1="642.3" x2="2417" y2="642.3"/><line x1="2412.8" y1="638.1" x2="2412.8" y2="646.5"/>
  <line x1="2237.6" y1="795.3" x2="2245.6" y2="795.3"/>
  <line x1="2318.6" y1="795.3" x2="2327" y2="795.3"/><line x1="2322.8" y1="791.1" x2="2322.8" y2="799.5"/>
  <line x1="2367.6" y1="795.3" x2="2375.6" y2="795.3"/>
  <line x1="2448.3" y1="795.3" x2="2456.7" y2="795.3"/><line x1="2452.5" y1="791.1" x2="2452.5" y2="799.5"/>
 </g>
 <circle cx="2486.6" cy="642.1" r="9.6" fill="#1a6cf6"/>
 <circle cx="2486.6" cy="795.7" r="9" fill="none" stroke="#4d4644" stroke-width="1.5"/>
<!--SVGMORE-->
</svg>
</div></div>
<div id="winborder"></div>
</body></html>
